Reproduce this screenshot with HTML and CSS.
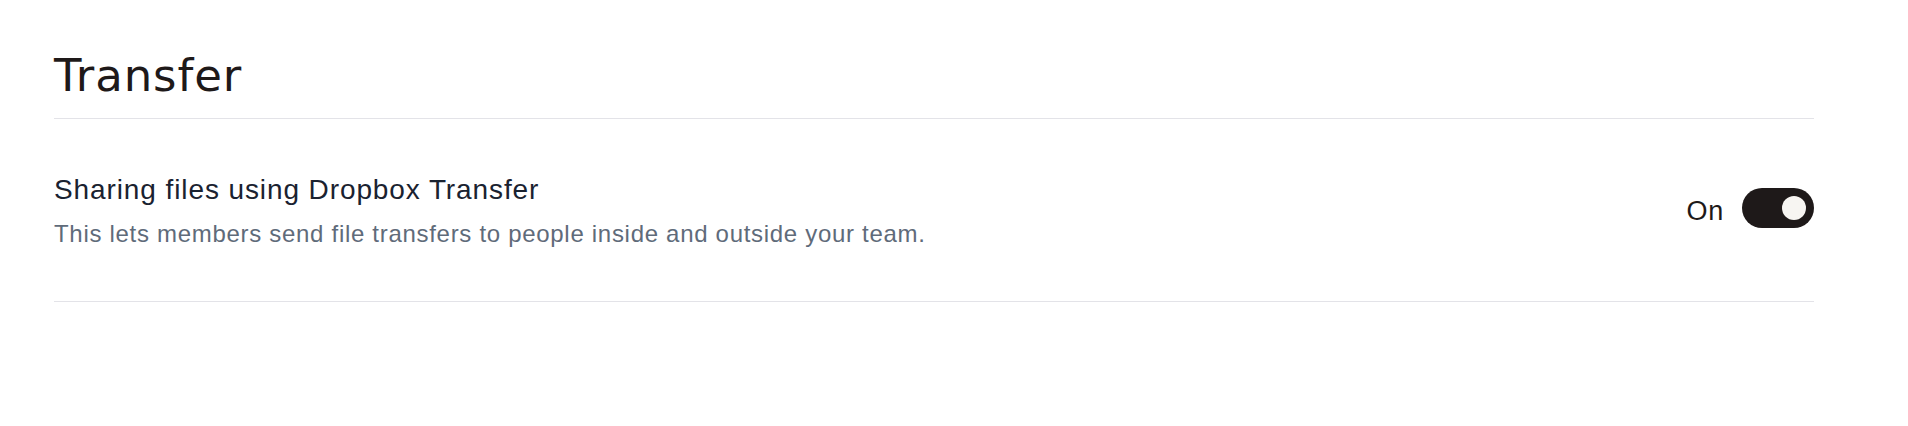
FILE: index.html
```html
<!DOCTYPE html>
<html lang="en">
<head>
<meta charset="utf-8">
<title>Transfer</title>
<link rel="stylesheet" href="styles.css">
</head>
<body>
<main class="page">
  <h1 class="title">Transfer</h1>
  <section class="setting">
    <div class="setting-text">
      <div class="setting-name">Sharing files using Dropbox Transfer</div>
      <div class="setting-desc">This lets members send file transfers to people inside and outside your team.</div>
    </div>
    <div class="setting-control">
      <span class="state">On</span>
      <span class="toggle" role="switch" aria-checked="true"><span class="knob"></span></span>
    </div>
  </section>
</main>
</body>
</html>
```
FILE: styles.css
```css
html, body {
  margin: 0;
  padding: 0;
  background: #ffffff;
}
.page {
  width: 1760px;
  margin-left: 54px;
  padding-top: 49px;
}
.title {
  margin: 0;
  font-family: "DejaVu Sans", sans-serif;
  font-weight: normal;
  font-size: 45px;
  line-height: 54px;
  letter-spacing: 0.9px;
  color: #1e1919;
  padding-bottom: 15px;
  border-bottom: 1px solid #e3e3e8;
}
.setting {
  display: flex;
  align-items: center;
  justify-content: space-between;
  padding: 53px 0 51px;
  border-bottom: 1px solid #e3e3e8;
}
.setting-name {
  font-family: "Liberation Sans", Arial, sans-serif;
  font-size: 28px;
  line-height: 36px;
  letter-spacing: 0.9px;
  color: #1a2230;
}
.setting-desc {
  margin-top: 10px;
  font-family: "Liberation Sans", Arial, sans-serif;
  font-size: 24px;
  line-height: 32px;
  letter-spacing: 0.7px;
  color: #5f6b7a;
}
.setting-control {
  display: flex;
  align-items: center;
  gap: 18px;
  margin-top: -6px;
}
.state {
  margin-top: 7px;
  font-family: "Liberation Sans", Arial, sans-serif;
  font-size: 27px;
  letter-spacing: 0.8px;
  color: #1e1919;
}
.toggle {
  display: flex;
  align-items: center;
  justify-content: flex-end;
  box-sizing: border-box;
  width: 72px;
  height: 40px;
  padding: 0 8px;
  border-radius: 20px;
  background: #1e1919;
}
.knob {
  width: 24px;
  height: 24px;
  border-radius: 50%;
  background: #f7f5f2;
}
```
